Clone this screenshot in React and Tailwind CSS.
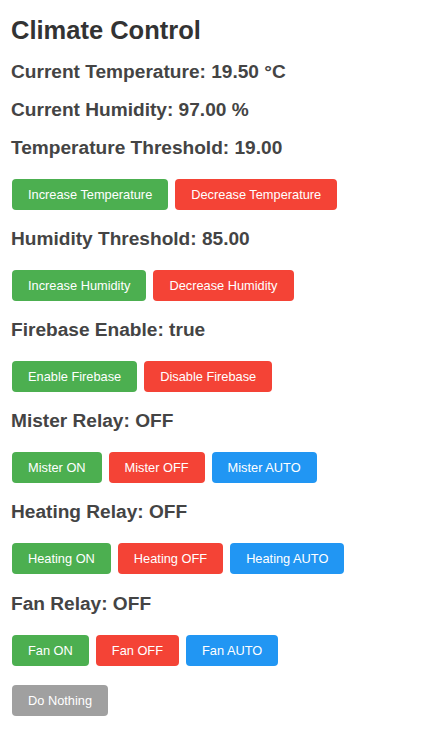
import React from "react";

const colors = {
  green: "bg-[#4caf50]",
  red: "bg-[#f44336]",
  blue: "bg-[#2196f3]",
  gray: "bg-[#a0a0a0]",
};

function Btn({ color, children }) {
  return (
    <button className={`${colors[color]} text-white text-[12.8px] leading-[15px] px-4 py-2 rounded`}>
      {children}
    </button>
  );
}

function Heading({ children }) {
  return <h2 className="text-[19.1px] leading-[22px] font-bold text-[#444]">{children}</h2>;
}

export default function App() {
  return (
    <div
      className="bg-white min-h-[735px] px-3 pt-[15px] flex flex-col items-start"
      style={{ fontFamily: '"Liberation Sans", Arial, sans-serif' }}
    >
      <h1 className="text-[25.5px] leading-[30px] font-bold text-[#333] -ml-px">Climate Control</h1>

      <div className="mt-4 -ml-px">
        <Heading>Current Temperature: 19.50 °C</Heading>
      </div>
      <div className="mt-4 -ml-px">
        <Heading>Current Humidity: 97.00 %</Heading>
      </div>
      <div className="mt-4 -ml-px">
        <Heading>Temperature Threshold: 19.00</Heading>
      </div>
      <div className="mt-5 flex gap-[7px]">
        <Btn color="green">Increase Temperature</Btn>
        <Btn color="red">Decrease Temperature</Btn>
      </div>

      <div className="mt-[18px] -ml-px">
        <Heading>Humidity Threshold: 85.00</Heading>
      </div>
      <div className="mt-5 flex gap-[7px]">
        <Btn color="green">Increase Humidity</Btn>
        <Btn color="red">Decrease Humidity</Btn>
      </div>

      <div className="mt-[18px] -ml-px">
        <Heading>Firebase Enable: true</Heading>
      </div>
      <div className="mt-5 flex gap-[7px]">
        <Btn color="green">Enable Firebase</Btn>
        <Btn color="red">Disable Firebase</Btn>
      </div>

      <div className="mt-[18px] -ml-px">
        <Heading>Mister Relay: OFF</Heading>
      </div>
      <div className="mt-5 flex gap-[7px]">
        <Btn color="green">Mister ON</Btn>
        <Btn color="red">Mister OFF</Btn>
        <Btn color="blue">Mister AUTO</Btn>
      </div>

      <div className="mt-[18px] -ml-px">
        <Heading>Heating Relay: OFF</Heading>
      </div>
      <div className="mt-5 flex gap-[7px]">
        <Btn color="green">Heating ON</Btn>
        <Btn color="red">Heating OFF</Btn>
        <Btn color="blue">Heating AUTO</Btn>
      </div>

      <div className="mt-[19px] -ml-px">
        <Heading>Fan Relay: OFF</Heading>
      </div>
      <div className="mt-5 flex gap-[7px]">
        <Btn color="green">Fan ON</Btn>
        <Btn color="red">Fan OFF</Btn>
        <Btn color="blue">Fan AUTO</Btn>
      </div>

      <div className="mt-[19px] flex">
        <Btn color="gray">Do Nothing</Btn>
      </div>
    </div>
  );
}
